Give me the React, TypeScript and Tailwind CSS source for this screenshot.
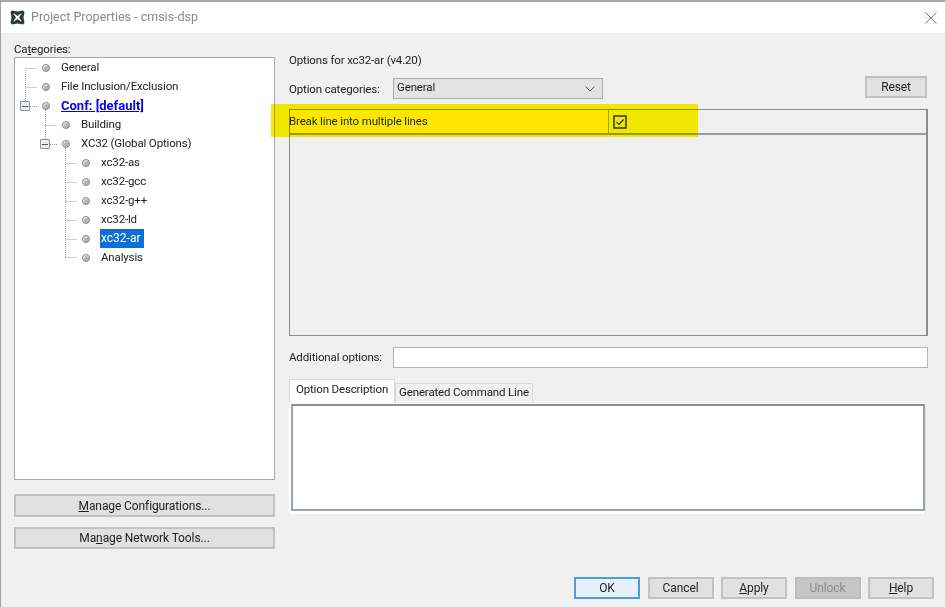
import { ReactNode } from "react";

const rows = [
  { label: "General", indent: "pl-[27px]" },
  { label: "File Inclusion/Exclusion", indent: "pl-[27px]" },
  { label: "Conf: [default]", indent: "pl-[27px]", link: true },
  { label: "Building", indent: "pl-[47px]" },
  { label: "XC32 (Global Options)", indent: "pl-[47px]" },
  { label: "xc32-as", indent: "pl-[67px]" },
  { label: "xc32-gcc", indent: "pl-[67px]" },
  { label: "xc32-g++", indent: "pl-[67px]" },
  { label: "xc32-ld", indent: "pl-[67px]" },
  { label: "xc32-ar", indent: "pl-[67px]", selected: true },
  { label: "Analysis", indent: "pl-[67px]" },
];

const Btn = ({ children, className = "" }: { children: ReactNode; className?: string }) => (
  <button className={`h-[22px] flex items-center justify-center border-2 border-[#c2c2c2] bg-[#e1e1e1] text-[#222] text-[12px] tracking-[-0.1px] ${className}`}>
    {children}
  </button>
);

const TreeLines = () => (
  <svg className="absolute left-0 top-0" width="120" height="210" fill="none" stroke="#9c9c9c" strokeDasharray="1 1">
    <path d="M10.500 10v34M10.500 10.500h11M10.500 29.500h11" />
    <path d="M30.500 48v34M30.500 67.500h11" />
    <path d="M50.500 86v114M50.500 105.500h11M50.500 124.500h11M50.500 143.500h11M50.500 162.500h11M50.500 181.500h11M50.500 199.500h11" />
    <path d="M15 48.500h7M35 86.500h7" />
  </svg>
);

const Minus = ({ className }: { className: string }) => (
  <span className={`absolute w-[10px] h-[10px] rounded-[1px] border border-[#8e949a] bg-[#ececec] flex items-center justify-center ${className}`}>
    <span className="w-[6px] h-px bg-[#3d6080]" />
  </span>
);

export default function App() {
  return (
    <div className="relative w-[945px] h-[607px] overflow-hidden whitespace-nowrap bg-[#f0f0f0] text-[11.5px] tracking-[-0.15px] text-[#222] font-['Roboto','Liberation_Sans',sans-serif] border-l border-[#a0a0a0] flex flex-col">
      <div className="h-[2px] bg-[#a8a8a8]" />
      {/* title bar */}
      <div className="h-[31px] bg-white flex items-center pl-[9px] pr-[8px] gap-[6px]">
        <svg width="15" height="15" viewBox="0 0 15 15">
          <path d="M2 .5 7.500 1.500 13 .5 14.500 2 13.500 7.500 14.500 13 13 14.500 7.500 13.500 2 14.500 .5 13 1.500 7.500 .5 2z" fill="#2f3a40" />
          <path d="M4 3.500 7.500 6 11 3.500 11.500 4 9 7.500l2.500 3.500-.5.500L7.500 9 4 11.500 3.500 11 6 7.500 3.500 4z" fill="#fff" />
        </svg>
        <span className="text-[#8a8a8a] text-[12.5px] tracking-normal">Project Properties - cmsis-dsp</span>
        <svg className="ml-auto" width="12" height="12" fill="none" stroke="#7a7a7a">
          <path d="M.5.5l11 11M11.500.5l-11 11" />
        </svg>
      </div>

      <div className="flex-1 flex">
        {/* left column */}
        <div className="w-[261px] ml-[13px] flex flex-col">
          <div className="h-[24px] pt-[9px] leading-[15px]">
            Ca<u>t</u>egories:
          </div>
          <div className="relative h-[423px] border border-[#a8a8a8] bg-white">
            <TreeLines />
            <Minus className="left-[5px] top-[43px]" />
            <Minus className="left-[25px] top-[81px]" />
            {rows.map((r) => (
              <div key={r.label} className={`relative h-[19px] flex items-center gap-[10px] ${r.indent}`}>
                <span className="w-[8px] h-[8px] rounded-full bg-[#b4b4b4] border border-[#8d8d8d] shadow-[inset_1px_1px_1px_#f0f0f0]" />
                {r.link ? (
                  <span className="px-px font-bold text-[13px] tracking-normal text-[#0000ee] underline">{r.label}</span>
                ) : r.selected ? (
                  <span className="px-px w-[44px] h-[19px] leading-[19px] bg-[#0b6fd4] text-white text-[12px] tracking-normal">{r.label}</span>
                ) : (
                  <span className="px-px">{r.label}</span>
                )}
              </div>
            ))}
          </div>
          <Btn className="mt-[14px] !h-[23px]">
            <span><u>M</u>anage Configurations...</span>
          </Btn>
          <Btn className="mt-[10px] !h-[22px]">
            <span>Ma<u>n</u>age Network Tools...</span>
          </Btn>
        </div>

        {/* right column */}
        <div className="w-[639px] ml-[14px] flex flex-col">
          <div className="h-[35px] pt-[20px] leading-[15px]">Options for xc32-ar (v4.20)</div>
          <div className="flex items-start h-[41px]">
            <span className="w-[104px] pt-[14px] leading-[15px]">Option categories:</span>
            <div className="w-[210px] mt-[10px] h-[21px] border border-[#adadad] bg-[#e3e3e3] flex items-center justify-between pl-[3px] pr-[7px]">
              <span className="-mt-[2px]">General</span>
              <svg width="10" height="6" fill="none" stroke="#555">
                <path d="M.5.5 5 5 9.500.5" />
              </svg>
            </div>
            <Btn className="ml-auto mr-[1px] mt-[8px] w-[62px] !h-[22px]">Reset</Btn>
          </div>
          <div className="h-[227px] border border-[#8c8c8c] border-r-2">
            <div className="flex h-[25px] border-b-2 border-[#9a9a9a]">
              <div className="w-[319px] bg-white border-r border-[#a0a0a0] flex items-center">
                <span className="-ml-px">Break line into multiple lines</span>
              </div>
              <div className="flex-1 flex items-center pl-[4px]">
                <svg width="14" height="14" fill="none">
                  <rect x="1" y="1" width="12" height="12" stroke="#333" strokeWidth="1.500" />
                  <path d="M3.500 7l2.500 2.500 4.500-5" stroke="#333" strokeWidth="1.200" />
                </svg>
              </div>
            </div>
          </div>
          <div className="flex items-center mt-[11px] h-[21px]">
            <span className="w-[104px]">Additional options:</span>
            <div className="flex-1 h-[21px] border border-[#b4b4b4] bg-white" />
          </div>
          <div className="flex items-end mt-[11px] h-[24px]">
            <div className="w-[106px] h-[24px] pb-[3px] border border-b-0 border-[#d9d9d9] bg-white flex items-center justify-center">Option Description</div>
            <div className="w-[138px] h-[20px] pb-[2px] border border-b-0 border-[#d9d9d9] bg-[#f0f0f0] flex items-center justify-center">Generated Command Line</div>
          </div>
          <div className="h-[111px] w-[637px] bg-white pt-[1px] px-[2px] pb-[3px] border-r border-[#e3e3e3]">
            <div className="h-full w-[634px] border-2 border-[#9aa1a8] border-t-[#8f8f8f] bg-white" />
          </div>
          <div className="flex justify-end gap-[7.5px] mt-[63px] -mr-[6px] [&>button]:w-[66px]">
            <Btn className="!border-[#4a9be0] !bg-[#e5f0fa]">OK</Btn>
            <Btn>Cancel</Btn>
            <Btn><span><u>A</u>pply</span></Btn>
            <Btn className="!border-[#bdbdbd] !bg-[#c6c6c6] !text-[#8c8c8c]">Unlock</Btn>
            <Btn><span><u>H</u>elp</span></Btn>
          </div>
        </div>
      </div>

      {/* yellow marker over the first table row */}
      <div className="absolute left-[270px] top-[104px] flex h-[33px] mix-blend-darken">
        <div className="w-[338px] bg-[#ffe600]" />
        <div className="w-[89px] bg-[#f0e800]" />
      </div>
    </div>
  );
}
